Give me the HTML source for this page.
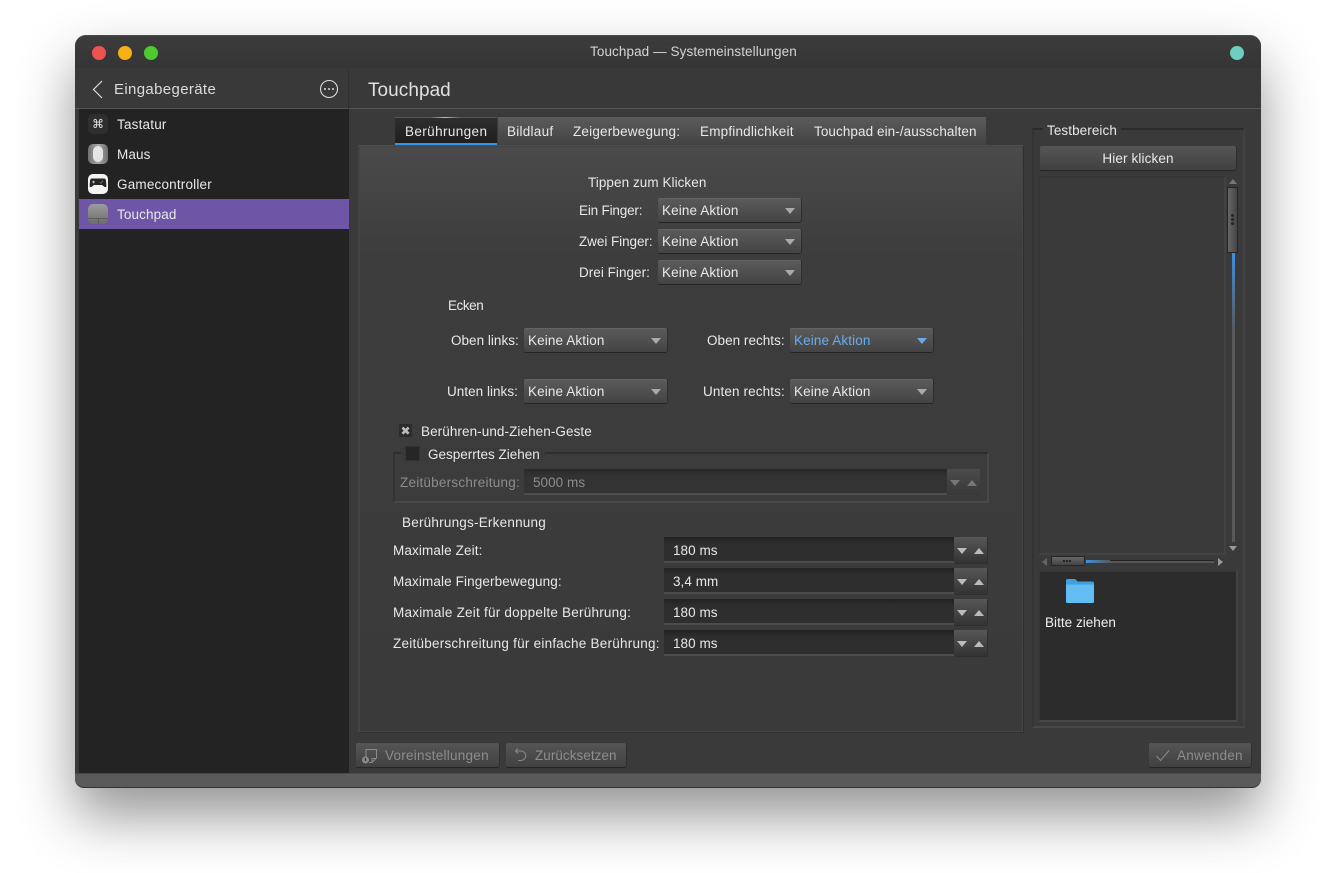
<!DOCTYPE html>
<html lang="de"><head><meta charset="utf-8"><title>Touchpad — Systemeinstellungen</title>
<style>
html,body{margin:0;padding:0;background:#fff}
body{width:1336px;height:873px;overflow:hidden;position:relative;font:13.5px/16px "Liberation Sans",sans-serif;color:#e8e8e8}
div,span,svg{position:absolute;box-sizing:border-box}
.t{white-space:nowrap;letter-spacing:.12px;margin-top:1px}
.win{left:75px;top:35px;width:1186px;height:753px;border-radius:11px 11px 9px 9px;background:#3a3a3a;box-shadow:0 28px 56px 0 rgba(0,0,0,.42);overflow:hidden;border-bottom:1px solid #333}
.c{border-radius:2px;background:linear-gradient(#5a5a5a,#444);box-shadow:0 1px 0 #242424,1px 0 0 #2e2e2e;width:143px;height:24px;border-top:1px solid #636363}
.c i{position:absolute;right:6px;top:9px;border:5px solid transparent;border-top:6px solid #aaa;border-bottom:0}
.c.b i{border-top-color:#69a9e6}
.c span{left:4px;top:4px;white-space:nowrap;letter-spacing:.12px}
.b span{color:#6aabed}
.s{height:26px;background:linear-gradient(#222,#2e2e2e 30%,#2e2e2e);border-bottom:2px solid #4d4d4d}
.s span{left:9px;top:6px;white-space:nowrap;letter-spacing:.05px}
.sb{width:33px;height:26px;background:linear-gradient(#575757,#333);box-shadow:1px 1px 0 #2f2f2f}
.sb i,.sb b{position:absolute;top:11px}
.sb i{left:3px;border:5px solid transparent;border-top:6px solid #bbb;border-bottom:0}
.sb b{left:20px;border:5px solid transparent;border-bottom:6px solid #bbb;border-top:0}
.btn{height:24px;border-radius:2px;background:linear-gradient(#555,#414141);box-shadow:0 1px 0 #262626,1px 0 0 #2e2e2e}
.dim{color:#8d8d8d}
</style></head><body>
<div class="win"></div>

<!-- titlebar -->
<div style="left:75px;top:35px;width:1186px;height:33px;border-radius:11px 11px 0 0;background:linear-gradient(#3c3c3c,#353535);border-top:1px solid #4a4a4a"></div>
<div style="left:92px;top:46px;width:14px;height:14px;border-radius:50%;background:#ee5350"></div>
<div style="left:118px;top:46px;width:14px;height:14px;border-radius:50%;background:#f5b014"></div>
<div style="left:144px;top:46px;width:14px;height:14px;border-radius:50%;background:#4ec92f"></div>
<div style="left:1230px;top:46px;width:14px;height:14px;border-radius:50%;background:#6dcfc0"></div>
<span class="t" style="left:590px;top:43px;color:#d4d4d4;letter-spacing:.09px">Touchpad — Systemeinstellungen</span>

<!-- headers -->
<div style="left:75px;top:68px;width:1186px;height:41px;background:#393939;border-bottom:1px solid #555"></div>
<div style="left:348px;top:68px;width:1px;height:41px;background:#303030"></div>
<svg style="left:90px;top:80px" width="16" height="20" viewBox="0 0 16 20"><path d="M12 1 3.500 9.500 12 18" fill="none" stroke="#ddd" stroke-width="1.200"/></svg>
<span class="t" style="left:114px;top:81px;font-size:15px;color:#dcdcdc;letter-spacing:.35px">Eingabegeräte</span>
<svg style="left:319px;top:79px" width="20" height="20" viewBox="0 0 20 20"><circle cx="10" cy="10" r="8.500" fill="none" stroke="#ddd" stroke-width="1.100"/><circle cx="6" cy="10" r="1" fill="#ddd"/><circle cx="10" cy="10" r="1" fill="#ddd"/><circle cx="14" cy="10" r="1" fill="#ddd"/></svg>
<span class="t" style="left:368px;top:79px;font-size:19px;line-height:22px;color:#e0e0e0;letter-spacing:.05px">Touchpad</span>

<!-- sidebar -->
<div style="left:79px;top:109px;width:270px;height:664px;background:#232323"></div>
<div style="left:79px;top:199px;width:270px;height:30px;background:#6f55a6"></div>
<div style="left:88px;top:114px;width:20px;height:20px;border-radius:5px;background:#2e2e2e"></div>
<span style="left:88px;top:116px;width:20px;text-align:center;font-size:12px;color:#e4e4e4;font-family:'DejaVu Sans',sans-serif">⌘</span>
<div style="left:88px;top:144px;width:20px;height:20px;border-radius:5px;background:linear-gradient(90deg,#707070,#a8a8a8 50%,#707070)"></div>
<div style="left:93px;top:146px;width:10px;height:16px;border-radius:5px;background:#e4e4e4"></div>
<div style="left:88px;top:174px;width:20px;height:20px;border-radius:5px;background:#f4f4f4"></div>
<svg style="left:88px;top:174px" width="20" height="20" viewBox="0 0 20 20"><path d="M4 4.500h12c1.300 0 2 1 2 2.500l.4 5c0 1.200-1.300 1.500-2.200.6L14 11H6l-2.200 1.600c-.9.900-2.200.6-2.200-.6L2 7c0-1.500.7-2.500 2-2.500z" fill="#262626"/><path d="M4 8h3M5.500 6.800v2.400" stroke="#ddd" stroke-width=".8"/><circle cx="14.500" cy="7.300" r=".8" fill="#d44"/><circle cx="13" cy="8.800" r=".8" fill="#4a4"/></svg>
<div style="left:88px;top:204px;width:20px;height:20px;border-radius:5px;background:linear-gradient(#9c9c9c,#6c6c6c)"></div>
<div style="left:88px;top:218px;width:20px;height:1px;background:#5d5d5d"></div>
<div style="left:98px;top:218px;width:1px;height:6px;background:#5d5d5d"></div>
<span class="t" style="left:117px;top:116px;letter-spacing:.2px">Tastatur</span>
<span class="t" style="left:117px;top:146px">Maus</span>
<span class="t" style="left:117px;top:176px;letter-spacing:.19px">Gamecontroller</span>
<span class="t" style="left:117px;top:206px">Touchpad</span>

<!-- bottom strip -->
<div style="left:75px;top:773px;width:1186px;height:14px;border-radius:0 0 9px 9px;background:#5a5a5a;border-top:1px solid #484848"></div>

<!-- tab panel -->
<div style="left:358px;top:145px;width:666px;height:588px;background:linear-gradient(#4a4a4b,#3d3d3d 110px,#3a3a3a);border:1px solid #444;border-right-color:#303030;border-bottom-color:#303030;border-top-color:#4e4e4e;box-shadow:inset 0 0 0 1px #444"></div>
<div style="left:498px;top:117px;width:488px;height:28px;background:linear-gradient(#5b5b5b,#434343)"></div>
<div style="left:395px;top:117px;width:102px;height:28px;background:linear-gradient(#2d2d2d,#1f1f1f);border-top:1px solid #555;border-bottom:2px solid #3294ec"></div>
<div style="left:430px;top:117px;width:30px;height:1px;background:linear-gradient(90deg,#555,#bbb,#555)"></div>
<span class="t" style="left:405px;top:123px;letter-spacing:.39px">Berührungen</span>
<span class="t" style="left:507px;top:123px;letter-spacing:.26px">Bildlauf</span>
<span class="t" style="left:573px;top:123px;letter-spacing:.19px">Zeigerbewegung:</span>
<span class="t" style="left:700px;top:123px;letter-spacing:.19px">Empfindlichkeit</span>
<span class="t" style="left:814px;top:123px;letter-spacing:.08px">Touchpad ein-/ausschalten</span>

<span class="t" style="left:588px;top:174px;letter-spacing:.06px">Tippen zum Klicken</span>
<span class="t" style="left:579px;top:202px;letter-spacing:-.18px">Ein Finger:</span>
<span class="t" style="left:579px;top:233px;letter-spacing:-.06px">Zwei Finger:</span>
<span class="t" style="left:579px;top:264px;letter-spacing:.03px">Drei Finger:</span>
<div class="c" style="left:658px;top:198px"><span>Keine Aktion</span><i></i></div>
<div class="c" style="left:658px;top:229px"><span>Keine Aktion</span><i></i></div>
<div class="c" style="left:658px;top:260px"><span>Keine Aktion</span><i></i></div>

<span class="t" style="left:448px;top:297px;letter-spacing:-.45px">Ecken</span>
<span class="t" style="left:451px;top:332px;letter-spacing:.02px">Oben links:</span>
<span class="t" style="left:707px;top:332px;letter-spacing:.03px">Oben rechts:</span>
<span class="t" style="left:447px;top:383px;letter-spacing:.03px">Unten links:</span>
<span class="t" style="left:703px;top:383px">Unten rechts:</span>
<div class="c" style="left:524px;top:328px"><span>Keine Aktion</span><i></i></div>
<div class="c b" style="left:790px;top:328px"><span>Keine Aktion</span><i></i></div>
<div class="c" style="left:524px;top:379px"><span>Keine Aktion</span><i></i></div>
<div class="c" style="left:790px;top:379px"><span>Keine Aktion</span><i></i></div>

<div style="left:399px;top:424px;width:13px;height:13px;background:#2b2b2b;border-radius:1px"></div>
<span style="left:400px;top:425px;width:11px;text-align:center;font-size:12px;line-height:13px;font-weight:bold;color:#bbb;font-family:'DejaVu Sans',sans-serif">✖</span>
<span class="t" style="left:421px;top:423px;letter-spacing:.08px">Berühren-und-Ziehen-Geste</span>

<!-- locked drag group -->
<div style="left:393px;top:452px;width:596px;height:51px;border:2px solid #484848;border-top-color:#2e2e2e;border-left-color:#333"></div>
<div style="left:401px;top:448px;width:144px;height:12px;background:#3a3a3a"></div>
<div style="left:406px;top:447px;width:13px;height:13px;background:#262626;box-shadow:0 0 0 1px #333"></div>
<span class="t" style="left:428px;top:446px;letter-spacing:0">Gesperrtes Ziehen</span>
<span class="t dim" style="left:400px;top:474px;letter-spacing:.23px">Zeitüberschreitung:</span>
<div class="s" style="left:524px;top:469px;width:423px;background:linear-gradient(#282828,#333 30%)"><span class="dim">5000 ms</span></div>
<div class="sb" style="left:947px;top:469px;background:linear-gradient(#4c4c4c,#383838);box-shadow:none"><i style="border-top-color:#777"></i><b style="border-bottom-color:#777"></b></div>

<span class="t" style="left:402px;top:514px;letter-spacing:.22px">Berührungs-Erkennung</span>
<span class="t" style="left:393px;top:542px">Maximale Zeit:</span>
<span class="t" style="left:393px;top:573px">Maximale Fingerbewegung:</span>
<span class="t" style="left:393px;top:604px;letter-spacing:.23px">Maximale Zeit für doppelte Berührung:</span>
<span class="t" style="left:393px;top:635px;letter-spacing:.24px">Zeitüberschreitung für einfache Berührung:</span>
<div class="s" style="left:664px;top:537px;width:290px"><span>180 ms</span></div>
<div class="s" style="left:664px;top:568px;width:290px"><span>3,4 mm</span></div>
<div class="s" style="left:664px;top:599px;width:290px"><span>180 ms</span></div>
<div class="s" style="left:664px;top:630px;width:290px"><span>180 ms</span></div>
<div class="sb" style="left:954px;top:537px"><i></i><b></b></div>
<div class="sb" style="left:954px;top:568px"><i></i><b></b></div>
<div class="sb" style="left:954px;top:599px"><i></i><b></b></div>
<div class="sb" style="left:954px;top:630px"><i></i><b></b></div>

<!-- Testbereich -->
<div style="left:1032px;top:128px;width:213px;height:600px;border:2px solid #343434;border-top-color:#2b2b2b;border-bottom-color:#474747;border-right-color:#414141"></div>
<div style="left:1043px;top:124px;width:78px;height:10px;background:#3a3a3a"></div>
<span class="t" style="left:1047px;top:122px;letter-spacing:.08px">Testbereich</span>
<div class="btn" style="left:1040px;top:146px;width:196px"></div>
<span class="t" style="left:1040px;top:150px;width:196px;text-align:center">Hier klicken</span>
<div style="left:1038px;top:176px;width:188px;height:379px;background:#3a3a3a;border:2px solid #353535;border-bottom-color:#424242;border-right-color:#424242"></div>
<div style="left:1232px;top:190px;width:3px;height:352px;background:#585858"></div>
<div style="left:1232px;top:252px;width:3px;height:80px;background:linear-gradient(#3f8fe0,#585858)"></div>
<div style="left:1229px;top:179px;border:4px solid transparent;border-bottom:5px solid #777;border-top:0"></div>
<div style="left:1229px;top:546px;border:4px solid transparent;border-top:5px solid #999;border-bottom:0"></div>
<div style="left:1227px;top:187px;width:11px;height:66px;background:linear-gradient(90deg,#666,#444);border:1px solid #262626"></div>
<div style="left:1231px;top:214px;width:3px;height:3px;background:#262626;border-radius:50%;box-shadow:0 4px 0 #262626,0 8px 0 #262626"></div>
<!-- h scrollbar -->
<div style="left:1042px;top:558px;border:4px solid transparent;border-right:5px solid #666;border-left:0"></div>
<div style="left:1218px;top:558px;border:4px solid transparent;border-left:5px solid #999;border-right:0"></div>
<div style="left:1086px;top:560px;width:128px;height:3px;background:#585858;border-top:1px solid #222"></div>
<div style="left:1086px;top:560px;width:24px;height:3px;background:linear-gradient(90deg,#3f8fe0,#585858)"></div>
<div style="left:1051px;top:556px;width:34px;height:10px;background:linear-gradient(#666,#444);border:1px solid #262626;border-radius:1px"></div>
<div style="left:1063px;top:560px;width:2px;height:2px;background:#222;box-shadow:3px 0 0 #222,6px 0 0 #222"></div>
<!-- drag area -->
<div style="left:1038px;top:570px;width:200px;height:152px;background:#2c2c2c;border:2px solid #383838;border-bottom-color:#484848;border-right-color:#444"></div>
<svg style="left:1065px;top:578px" width="30" height="26" viewBox="0 0 30 26"><path d="M1 2.500C1 1.500 1.700 1 2.500 1h7c.7 0 1.300.4 1.800 1l1.200 1.500H27.500c.8 0 1.500.6 1.500 1.500v18.500c0 .9-.7 1.500-1.500 1.500h-25C1.700 25 1 24.400 1 23.500z" fill="#3f9fdf"/><path d="M1 6.500h28v17c0 .9-.7 1.500-1.500 1.500h-25C1.700 25 1 24.400 1 23.500z" fill="#64bdf2"/></svg>
<span class="t" style="left:1045px;top:614px;color:#f0f0f0;letter-spacing:.03px">Bitte ziehen</span>

<!-- footer buttons -->
<div class="btn" style="left:356px;top:743px;width:143px"></div>
<div class="btn" style="left:506px;top:743px;width:120px"></div>
<div class="btn" style="left:1149px;top:743px;width:102px"></div>
<svg style="left:361px;top:747px" width="18" height="18" viewBox="0 0 18 18"><path d="M5 12V2.500h10.500V11L11 15.500H8" fill="none" stroke="#8a8a8a" stroke-width="1"/><path d="M11 15v-3.500h4" fill="none" stroke="#8a8a8a" stroke-width="1"/><circle cx="4.500" cy="13" r="3.500" fill="#8a8a8a"/><path d="M4.500 11v3" stroke="#333" stroke-width="1.200"/></svg>
<svg style="left:513px;top:747px" width="16" height="16" viewBox="0 0 16 16"><path d="M5 1.500 2.500 4 5 6.500M2.500 4H8a4.300 4.300 0 0 1 0 9.500H5" fill="none" stroke="#8a8a8a" stroke-width="1"/></svg>
<svg style="left:1155px;top:749px" width="16" height="13" viewBox="0 0 16 13"><path d="M1.500 7l4 4.500L14 1.500" fill="none" stroke="#8a8a8a" stroke-width="1"/></svg>
<span class="t dim" style="left:385px;top:747px;letter-spacing:.25px">Voreinstellungen</span>
<span class="t dim" style="left:535px;top:747px;letter-spacing:.04px">Zurücksetzen</span>
<span class="t dim" style="left:1177px;top:747px;letter-spacing:.25px">Anwenden</span>
</body></html>
